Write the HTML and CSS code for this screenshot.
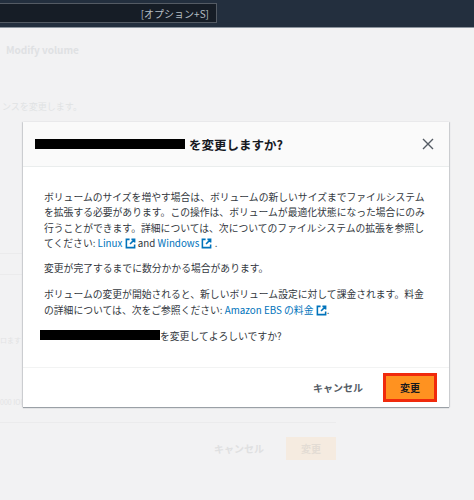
FILE: index.html
```html
<!DOCTYPE html>
<html lang="ja">
<head>
    <meta charset="UTF-8">
    <meta name="viewport" content="width=device-width, initial-scale=1.0">
    <title>Modify volume</title>
    <link rel="stylesheet" href="styles.css">
</head>
<body>
    <header class="topbar">
        <div class="search"><span class="shortcut">[オプション+S]</span></div>
    </header>

    <main class="page">
        <h1 class="page-title">Modify volume</h1>
        <p class="page-desc">ンスを変更します。</p>
        <div class="card">
            <div class="field field-type"></div>
            <div class="field field-size"></div>
            <p class="hint hint-size">ロます</p>
            <p class="hint hint-iops">000 IOI</p>
            <div class="card-footer">
                <span class="ghost-cancel">キャンセル</span>
                <span class="ghost-submit">変更</span>
            </div>
        </div>
    </main>

    <div class="modal">
        <div class="modal-header">
            <h2 class="modal-title"><span class="redact redact-title"></span> を変更しますか?</h2>
            <svg class="close" viewBox="0 0 12 12" width="12" height="12">
                <path d="M1 1 L11 11 M11 1 L1 11" stroke="#545b64" stroke-width="1.4" fill="none"/>
            </svg>
        </div>
        <div class="modal-body">
            <p>ボリュームのサイズを増やす場合は、ボリュームの新しいサイズまでファイルシステム<br>
            を拡張する必要があります。この操作は、ボリュームが最適化状態になった場合にのみ<br>
            行うことができます。詳細については、次についてのファイルシステムの拡張を参照し<br>
            てください: <a href="#">Linux <svg class="ext" viewBox="0 0 12 12" width="11" height="11"><path d="M5 1.5 H1.5 V10.5 H10.5 V7 M7 1.5 H10.5 V5 M10.5 1.5 L5.5 6.5" stroke="#0073bb" stroke-width="1.7" fill="none"/></svg></a> and <a href="#">Windows <svg class="ext" viewBox="0 0 12 12" width="11" height="11"><path d="M5 1.5 H1.5 V10.5 H10.5 V7 M7 1.5 H10.5 V5 M10.5 1.5 L5.5 6.5" stroke="#0073bb" stroke-width="1.7" fill="none"/></svg></a> .</p>
            <p>変更が完了するまでに数分かかる場合があります。</p>
            <p>ボリュームの変更が開始されると、新しいボリューム設定に対して課金されます。料金<br>
            の詳細については、次をご参照ください: <a href="#">Amazon EBS の料金 <svg class="ext" viewBox="0 0 12 12" width="11" height="11"><path d="M5 1.5 H1.5 V10.5 H10.5 V7 M7 1.5 H10.5 V5 M10.5 1.5 L5.5 6.5" stroke="#0073bb" stroke-width="1.7" fill="none"/></svg></a>.</p>
            <p class="confirm"><span class="redact redact-body"></span>を変更してよろしいですか?</p>
        </div>
        <div class="modal-footer">
            <span class="btn-cancel">キャンセル</span>
            <span class="btn-submit">変更</span>
        </div>
    </div>
</body>
</html>
```

FILE: styles.css
```css
* {
    box-sizing: border-box;
}
body {
    margin: 0;
    height: 500px;
    overflow: hidden;
    position: relative;
    background-color: #f2f2f3;
    font-family: "Noto Sans CJK JP", "Noto Sans", sans-serif;
    color: #16191f;
}
.topbar {
    height: 28px;
    padding-top: 3px;
    background-color: #232f3e;
    border-bottom: 1px solid #8d959e;
}
.search {
    width: 217px;
    height: 20px;
    padding-right: 7px;
    display: flex;
    align-items: center;
    justify-content: flex-end;
    background-color: #161d26;
    border: 1px solid #545b64;
    border-left: 0;
}
.shortcut {
    font-size: 10px;
    color: #b5bdc4;
}
.page {
    padding: 15px 0 0 6px;
}
.page-title {
    margin: 0;
    font-size: 10px;
    line-height: 14px;
    font-weight: 700;
    color: #dfe1e3;
}
.page-desc {
    margin: 43px 0 0 -4px;
    font-size: 9px;
    line-height: 14px;
    color: #e0e2e3;
}
.card {
    width: 336px;
    margin-left: -6px;
    display: flex;
    flex-direction: column;
}
.field {
    border-bottom: 1px solid #ebebec;
}
.field-type {
    height: 140px;
}
.field-size {
    height: 21px;
}
.hint {
    margin: 0;
    font-size: 7px;
    line-height: 14px;
    color: #e2e3e4;
}
.hint-size {
    margin-top: 58px;
}
.hint-iops {
    margin-top: 48px;
}
.card-footer {
    height: 68px;
    margin-top: 13px;
    padding-top: 14px;
    display: flex;
    align-items: flex-start;
    justify-content: flex-end;
    gap: 22px;
    border-top: 1px solid #ebebec;
}
.ghost-cancel {
    font-size: 10px;
    line-height: 23px;
    font-weight: 700;
    color: #dfe0e1;
}
.ghost-submit {
    width: 50px;
    height: 23px;
    display: flex;
    align-items: center;
    justify-content: center;
    font-size: 10px;
    font-weight: 700;
    color: #e3dcd4;
    background-color: #f5ebe0;
}
.modal {
    position: absolute;
    left: 23px;
    top: 122px;
    width: 426px;
    height: 285px;
    display: flex;
    flex-direction: column;
    background-color: #ffffff;
    box-shadow: 0 1px 1px #9aa0a6, 1px 0 1px #d5d7d9, -1px 0 1px #d5d7d9;
}
.modal-header {
    height: 45px;
    padding: 0 15px 0 12px;
    display: flex;
    align-items: center;
    justify-content: space-between;
    background-color: #fafafa;
    border-bottom: 1px solid #eaeded;
}
.modal-title {
    margin: 0;
    font-size: 12.5px;
    font-weight: 700;
    display: flex;
    align-items: center;
    gap: 4px;
}
.redact {
    display: inline-block;
    background-color: #000000;
}
.redact-title {
    width: 150px;
    height: 10px;
}
.redact-body {
    width: 120px;
    height: 10px;
    margin-left: -4px;
}
.modal-body {
    flex: 1;
    padding: 22.5px 20px 0 21px;
    font-size: 9.8px;
    line-height: 15.5px;
    color: #33383e;
}
.modal-body p {
    margin: 0 0 11px;
}
.modal-body p:first-child {
    margin-bottom: 9px;
}
.modal-body a {
    color: #0073bb;
    text-decoration: none;
}
.ext {
    vertical-align: -2px;
}
.modal-footer {
    height: 40px;
    padding-right: 12px;
    display: flex;
    align-items: center;
    justify-content: flex-end;
    gap: 20px;
    border-top: 1px solid #f2f3f3;
}
.btn-cancel {
    font-size: 10px;
    font-weight: 700;
    color: #545b64;
}
.btn-submit {
    width: 54px;
    height: 29px;
    display: flex;
    align-items: center;
    justify-content: center;
    font-size: 10px;
    font-weight: 700;
    color: #16191f;
    background-color: #ff9220;
    border: 3px solid #f02a0c;
}
```
